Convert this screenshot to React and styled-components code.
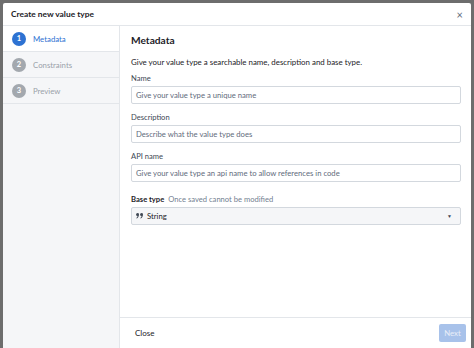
import React from "react";
import styled, { createGlobalStyle } from "styled-components";

const Global = createGlobalStyle`
  html, body { margin: 0; padding: 0; }
  body {
    background: #6d6d6d;
    font-family: "Lato", "Open Sans", sans-serif;
    height: 348px;
    overflow: hidden;
  }
  * { box-sizing: border-box; }
`;

const Modal = styled.div`
  margin: 3px 3px 0 3px;
  height: 345px;
  background: #fff;
  display: flex;
  flex-direction: column;
  border-radius: 2px 2px 0 0;
`;

const Header = styled.div`
  height: 23px;
  display: flex;
  align-items: center;
  justify-content: space-between;
  padding: 0 8px 0 8px;
  border-bottom: 1px solid #e3e6ea;
`;

const Title = styled.div`
  font-size: 8.4px;
  font-weight: 700;
  color: #1c2127;
`;

const CloseX = styled.div`
  font-size: 11px;
  color: #5f6b7c;
  line-height: 1;
`;

const Body = styled.div`
  flex: 1;
  display: flex;
  min-height: 0;
`;

const Sidebar = styled.div`
  width: 117px;
  background: #f5f6f8;
  border-right: 1px solid #e3e6ea;
`;

const Step = styled.div`
  height: 26px;
  display: flex;
  align-items: center;
  gap: 7px;
  padding-left: 9px;
  border-bottom: 1px solid #e3e6ea;
  background: ${(p) => (p.active ? "#fff" : "transparent")};
  color: ${(p) => (p.active ? "#2d72d2" : "#9aa1a9")};
  font-size: 7.8px;
`;

const Num = styled.span`
  width: 14px;
  height: 14px;
  border-radius: 50%;
  background: ${(p) => (p.active ? "#2d72d2" : "#a3a8ae")};
  color: #fff;
  font-size: 7.5px;
  font-weight: 700;
  display: flex;
  align-items: center;
  justify-content: center;
`;

const Main = styled.div`
  flex: 1;
  display: flex;
  flex-direction: column;
`;

const Content = styled.div`
  flex: 1;
  padding: 8px 10px 0 11px;
  border-bottom: 1px solid #e3e6ea;
`;

const Heading = styled.div`
  font-size: 10.2px;
  font-weight: 700;
  color: #1c2127;
  margin-bottom: 11px;
`;

const Intro = styled.div`
  font-size: 7.9px;
  color: #1c2127;
  margin-bottom: 6px;
`;

const Label = styled.div`
  font-size: 7.6px;
  color: #404854;
  margin: ${(p) => (p.spaced ? "12px 0 3px" : "0 0 3px")};
  display: flex;
  gap: 4px;
  b { color: #1c2127; font-weight: 700; }
  span { color: #738091; }
`;

const Input = styled.div`
  height: 18px;
  border: 1px solid #d3d8de;
  border-radius: 2px;
  display: flex;
  align-items: center;
  padding: 0 4px;
  font-size: 7.7px;
  color: #5f6b7c;
  margin-bottom: 8px;
`;

const Select = styled(Input)`
  background: #f5f6f8;
  color: #1c2127;
  justify-content: space-between;
  padding: 0 8px 0 4px;
`;

const Value = styled.span`
  display: flex;
  align-items: center;
  gap: 3px;
`;

const Caret = styled.span`
  font-size: 5px;
  color: #404854;
`;

const Footer = styled.div`
  height: 30px;
  display: flex;
  align-items: center;
  justify-content: space-between;
  padding: 0 5px 0 15px;
`;

const FootBtn = styled.div`
  font-size: 8px;
  color: #1c2127;
`;

const Next = styled.div`
  width: 27px;
  height: 18px;
  border-radius: 2px;
  background: #a8c2ea;
  color: #e8eef8;
  font-size: 7.8px;
  display: flex;
  align-items: center;
  justify-content: center;
`;

const QuoteIcon = () => (
  <svg width="8" height="6" viewBox="0 0 8 6" fill="#404854">
    <path d="M1.6 0a1.4 1.4 0 0 1 1.4 1.4c0 1.8-1 3.3-2.4 4.1l-.3-.4c.8-.6 1.2-1.3 1.3-2A1.4 1.4 0 0 1 1.6 0z" />
    <path d="M5.6 0a1.4 1.4 0 0 1 1.4 1.4c0 1.8-1 3.3-2.4 4.1l-.3-.4c.8-.6 1.2-1.3 1.3-2A1.4 1.4 0 0 1 5.6 0z" />
  </svg>
);

const steps = ["Metadata", "Constraints", "Preview"];

export default function App() {
  return (
    <>
      <Global />
      <Modal>
        <Header>
          <Title>Create new value type</Title>
          <CloseX>×</CloseX>
        </Header>
        <Body>
          <Sidebar>
            {steps.map((s, i) => (
              <Step key={s} active={i === 0}>
                <Num active={i === 0}>{i + 1}</Num>
                {s}
              </Step>
            ))}
          </Sidebar>
          <Main>
            <Content>
              <Heading>Metadata</Heading>
              <Intro>Give your value type a searchable name, description and base type.</Intro>
              <Label>Name</Label>
              <Input>Give your value type a unique name</Input>
              <Label>Description</Label>
              <Input>Describe what the value type does</Input>
              <Label>API name</Label>
              <Input>Give your value type an api name to allow references in code</Input>
              <Label spaced>
                <b>Base type</b>
                <span>Once saved cannot be modified</span>
              </Label>
              <Select>
                <Value>
                  <QuoteIcon />
                  String
                </Value>
                <Caret>▼</Caret>
              </Select>
            </Content>
            <Footer>
              <FootBtn>Close</FootBtn>
              <Next>Next</Next>
            </Footer>
          </Main>
        </Body>
      </Modal>
    </>
  );
}
